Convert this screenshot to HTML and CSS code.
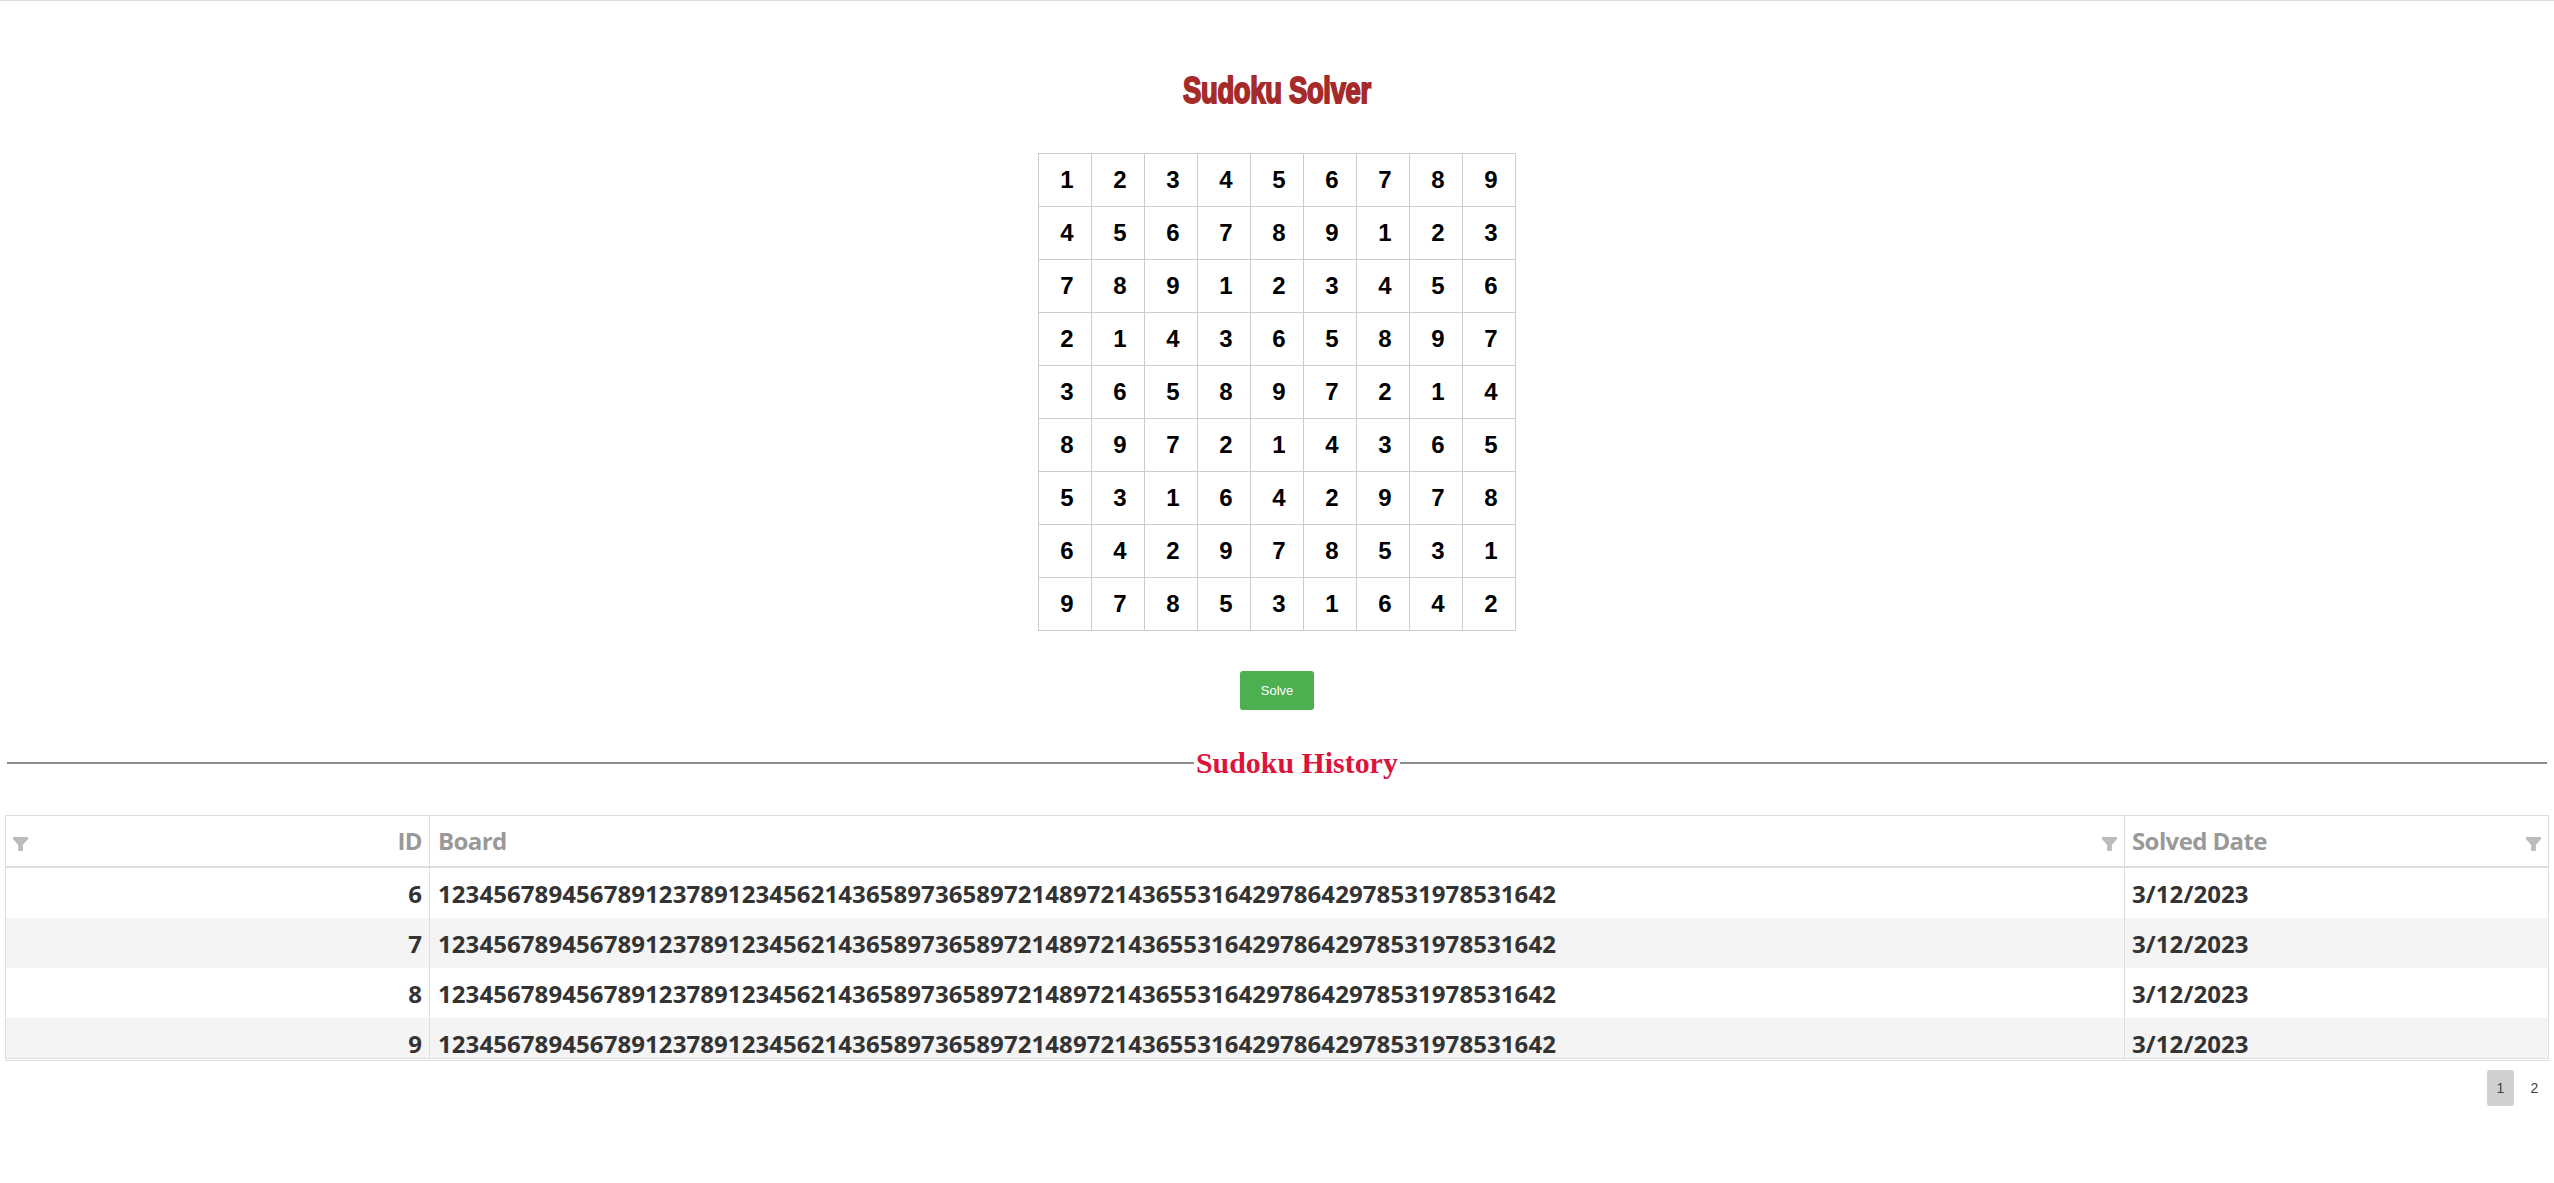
FILE: index.html
```html
<!DOCTYPE html>
<html lang="en">
<head>
    <meta charset="UTF-8">
    <meta name="viewport" content="width=device-width, initial-scale=1.0">
    <title>Sudoku Solver</title>
    <link rel="stylesheet" href="styles.css">
</head>
<body>
    <div class="solver">
        <h1 class="solver-title">Sudoku Solver</h1>
        <div class="board">
            <div class="cell">1</div><div class="cell">2</div><div class="cell">3</div><div class="cell">4</div><div class="cell">5</div><div class="cell">6</div><div class="cell">7</div><div class="cell">8</div><div class="cell">9</div>
            <div class="cell">4</div><div class="cell">5</div><div class="cell">6</div><div class="cell">7</div><div class="cell">8</div><div class="cell">9</div><div class="cell">1</div><div class="cell">2</div><div class="cell">3</div>
            <div class="cell">7</div><div class="cell">8</div><div class="cell">9</div><div class="cell">1</div><div class="cell">2</div><div class="cell">3</div><div class="cell">4</div><div class="cell">5</div><div class="cell">6</div>
            <div class="cell">2</div><div class="cell">1</div><div class="cell">4</div><div class="cell">3</div><div class="cell">6</div><div class="cell">5</div><div class="cell">8</div><div class="cell">9</div><div class="cell">7</div>
            <div class="cell">3</div><div class="cell">6</div><div class="cell">5</div><div class="cell">8</div><div class="cell">9</div><div class="cell">7</div><div class="cell">2</div><div class="cell">1</div><div class="cell">4</div>
            <div class="cell">8</div><div class="cell">9</div><div class="cell">7</div><div class="cell">2</div><div class="cell">1</div><div class="cell">4</div><div class="cell">3</div><div class="cell">6</div><div class="cell">5</div>
            <div class="cell">5</div><div class="cell">3</div><div class="cell">1</div><div class="cell">6</div><div class="cell">4</div><div class="cell">2</div><div class="cell">9</div><div class="cell">7</div><div class="cell">8</div>
            <div class="cell">6</div><div class="cell">4</div><div class="cell">2</div><div class="cell">9</div><div class="cell">7</div><div class="cell">8</div><div class="cell">5</div><div class="cell">3</div><div class="cell">1</div>
            <div class="cell">9</div><div class="cell">7</div><div class="cell">8</div><div class="cell">5</div><div class="cell">3</div><div class="cell">1</div><div class="cell">6</div><div class="cell">4</div><div class="cell">2</div>
        </div>
        <button class="solve-btn" type="button">Solve</button>
    </div>

    <div class="history-heading">
        <span class="rule rule-left"></span>
        <h2>Sudoku History</h2>
        <span class="rule"></span>
    </div>

    <div class="history">
        <div class="history-box">
            <div class="history-clip">
                <table class="history-table">
                    <colgroup>
                        <col class="col-id">
                        <col class="col-board">
                        <col>
                    </colgroup>
                    <thead>
                        <tr>
                            <th>
                                <div class="head-cell head-id">
                                    <span>ID</span>
                                    <svg class="filter" viewBox="0 0 15 14"><path d="M0 0H15V2L9.8 8V14H5.2V8L0 2Z"/></svg>
                                </div>
                            </th>
                            <th>
                                <div class="head-cell">
                                    <span>Board</span>
                                    <svg class="filter" viewBox="0 0 15 14"><path d="M0 0H15V2L9.8 8V14H5.2V8L0 2Z"/></svg>
                                </div>
                            </th>
                            <th>
                                <div class="head-cell head-date">
                                    <span>Solved Date</span>
                                    <svg class="filter" viewBox="0 0 15 14"><path d="M0 0H15V2L9.8 8V14H5.2V8L0 2Z"/></svg>
                                </div>
                            </th>
                        </tr>
                    </thead>
                    <tbody>
                        <tr>
                            <td class="num">6</td>
                            <td>123456789456789123789123456214365897365897214897214365531642978642978531978531642</td>
                            <td class="date">3/12/2023</td>
                        </tr>
                        <tr>
                            <td class="num">7</td>
                            <td>123456789456789123789123456214365897365897214897214365531642978642978531978531642</td>
                            <td class="date">3/12/2023</td>
                        </tr>
                        <tr>
                            <td class="num">8</td>
                            <td>123456789456789123789123456214365897365897214897214365531642978642978531978531642</td>
                            <td class="date">3/12/2023</td>
                        </tr>
                        <tr>
                            <td class="num">9</td>
                            <td>123456789456789123789123456214365897365897214897214365531642978642978531978531642</td>
                            <td class="date">3/12/2023</td>
                        </tr>
                    </tbody>
                </table>
            </div>
        </div>
        <div class="pager">
            <span class="page active">1</span>
            <span class="page">2</span>
        </div>
    </div>
</body>
</html>
```

FILE: styles.css
```css
body {
    margin: 0;
    background-color: #fff;
    border-top: 1px solid #ddd;
    font-family: 'Liberation Sans', Arial, sans-serif;
}

.solver {
    display: flex;
    flex-direction: column;
    align-items: center;
}

/* no Impact here, so squeeze a heavy sans down to the same shape */
.solver-title {
    margin: 68px 0 0;
    height: 84px;
    font-size: 37px;
    line-height: 44px;
    font-weight: 700;
    letter-spacing: -0.4px;
    color: #a52a2a;
    -webkit-text-stroke: 2px #a52a2a;
    transform: scaleX(0.74);
}

.board {
    display: grid;
    grid-template-columns: repeat(9, 53px);
    grid-auto-rows: 53px;
    border-top: 1px solid #ccc;
    border-left: 1px solid #ccc;
}

.cell {
    display: flex;
    align-items: center;
    justify-content: center;
    padding-left: 4px;
    border-right: 1px solid #ccc;
    border-bottom: 1px solid #ccc;
    font-size: 24px;
    font-weight: 700;
    color: #000;
}

.solve-btn {
    width: 74px;
    height: 39px;
    margin-top: 40px;
    padding: 0;
    background-color: #4caf50;
    border: none;
    border-radius: 3px;
    font-family: inherit;
    font-size: 13px;
    color: #fff;
}

.history-heading {
    display: flex;
    align-items: center;
    height: 40px;
    margin: 33px 7px 0;
}

.history-heading h2 {
    margin: 0 2px;
    font-family: 'Liberation Serif', 'Times New Roman', serif;
    font-size: 29.9px;
    font-weight: 700;
    line-height: 40px;
    color: #dc143c;
}

.rule {
    flex: 1;
    height: 2px;
    margin-top: -1px;
    background-color: #8c8c8c;
}

.rule-left {
    flex: none;
    width: 1187px;
}

.history {
    margin: 32px 5px 0;
}

.history-box {
    padding-bottom: 1px;
    border-bottom: 1px solid #ddd;
}

.history-clip {
    height: 242px;
    overflow: hidden;
    border: 1px solid #ddd;
}

.history-table {
    width: 100%;
    table-layout: fixed;
    border-collapse: separate;
    border-spacing: 0;
    font-family: 'Open Sans', 'Noto Sans', sans-serif;
    font-size: 24px;
}

.col-id {
    width: 424px;
}

.col-board {
    width: 1695px;
}

.history-table th {
    height: 50px;
    padding: 0;
    border-right: 1px solid #ddd;
    border-bottom: 2px solid #ddd;
    font-weight: 700;
    letter-spacing: -0.6px;
    text-align: left;
    color: #999;
}

.history-table th:last-child,
.history-table td:last-child {
    border-right: none;
}

.head-cell {
    display: flex;
    align-items: center;
    justify-content: space-between;
    padding: 0 7px 0 8px;
    line-height: 48px;
}

.head-id {
    flex-direction: row-reverse;
    padding: 0 7px;
}

.head-date {
    padding-left: 7px;
}

.filter {
    width: 15px;
    height: 14px;
    margin-top: 5px;
    fill: #bbb;
}

.history-table td {
    height: 50px;
    padding: 0 8px;
    border-right: 1px solid #ddd;
    font-weight: 700;
    letter-spacing: 0.08px;
    color: #333;
    white-space: nowrap;
}

.history-table tbody tr:nth-child(even) td {
    background-color: #f4f4f4;
}

.history-table td.num {
    padding-right: 7px;
    text-align: right;
}

.history-table td.date {
    padding-left: 7px;
}

.pager {
    display: flex;
    justify-content: flex-end;
    gap: 7px;
    margin-top: 9px;
    padding-right: 1px;
}

.page {
    width: 27px;
    height: 36px;
    border-radius: 3px;
    font-size: 14px;
    line-height: 36px;
    text-align: center;
    color: #444;
}

.page.active {
    background-color: #d0d0d0;
}
```
